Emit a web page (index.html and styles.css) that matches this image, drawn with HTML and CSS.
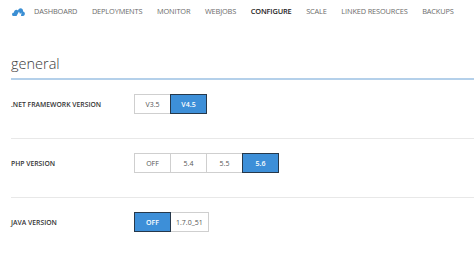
FILE: index.html
```html
<!DOCTYPE html>
<html lang="en">
<head>
  <meta charset="UTF-8" />
  <title>Configure</title>
  <link rel="stylesheet" href="styles.css">
</head>
<body>

  <nav class="top-nav">
    <svg class="logo" width="13" height="9" viewBox="0 0 13 9">
      <path d="M1.5 9 C-0.5 9 -0.5 5.5 2 5.5 C2 2.5 5 2 6 3.5 C7 0 11.5 0.5 11 4.5 C13.5 4.5 13.5 9 11 9 Z" fill="#3b8fd4"/>
      <path d="M4.5 9 L7 4.5 L8 7 L9.5 5.5 L9 9 Z" fill="#fff"/>
    </svg>
    <a href="#">DASHBOARD</a>
    <a href="#">DEPLOYMENTS</a>
    <a href="#">MONITOR</a>
    <a href="#">WEBJOBS</a>
    <a href="#" class="active">CONFIGURE</a>
    <a href="#">SCALE</a>
    <a href="#">LINKED RESOURCES</a>
    <a href="#">BACKUPS</a>
  </nav>

  <section class="settings">
    <h2 class="section-title">general</h2>

    <div class="setting-row">
      <span class="setting-label">.NET FRAMEWORK VERSION</span>
      <div class="toggle-group">
        <button>V3.5</button>
        <button class="selected">V4.5</button>
      </div>
    </div>

    <div class="setting-row">
      <span class="setting-label">PHP VERSION</span>
      <div class="toggle-group">
        <button>OFF</button>
        <button>5.4</button>
        <button>5.5</button>
        <button class="selected">5.6</button>
      </div>
    </div>

    <div class="setting-row last">
      <span class="setting-label">JAVA VERSION</span>
      <div class="toggle-group">
        <button class="selected">OFF</button>
        <button>1.7.0_51</button>
      </div>
    </div>
  </section>

</body>
</html>
```

FILE: styles.css
```css
* {
  box-sizing: border-box;
}

body {
  margin: 0;
  font-family: "Open Sans", "Noto Sans", sans-serif;
  background: #fff;
  color: #333;
}

.top-nav {
  display: flex;
  align-items: center;
  height: 22px;
  padding-left: 12px;
  white-space: nowrap;
}

.logo {
  margin-right: 9px;
  flex-shrink: 0;
}

.top-nav a {
  font-size: 7.4px;
  color: #6b6b6b;
  text-decoration: none;
  margin-right: 14.6px;
  letter-spacing: -0.15px;
  flex-shrink: 0;
}

.top-nav a.active {
  color: #222;
  font-weight: 600;
}

.settings {
  padding-left: 11px;
}

.section-title {
  margin: 0;
  padding-top: 33px;
  height: 58px;
  font-size: 14.5px;
  font-weight: 300;
  line-height: 18px;
  color: #3a3a3a;
  border-bottom: 2px solid #b4d0ea;
}

.setting-row {
  display: flex;
  align-items: center;
  padding: 14px 0 24px;
  border-bottom: 1px solid #e8e8e8;
}

.setting-row.last {
  border-bottom: none;
}

.setting-label {
  width: 123px;
  font-size: 6.8px;
  font-weight: 600;
  color: #333;
}

.toggle-group {
  display: flex;
}

.toggle-group button {
  height: 20px;
  min-width: 37px;
  margin-left: -1px;
  padding: 0 5px;
  font-family: inherit;
  font-size: 7px;
  color: #555;
  background: #fff;
  border: 1px solid #cfcfcf;
}

.toggle-group button:first-child {
  margin-left: 0;
}

.toggle-group button.selected {
  background: #3d8fd8;
  color: #fff;
  font-weight: 600;
  border-color: #26384a;
  position: relative;
}
```
